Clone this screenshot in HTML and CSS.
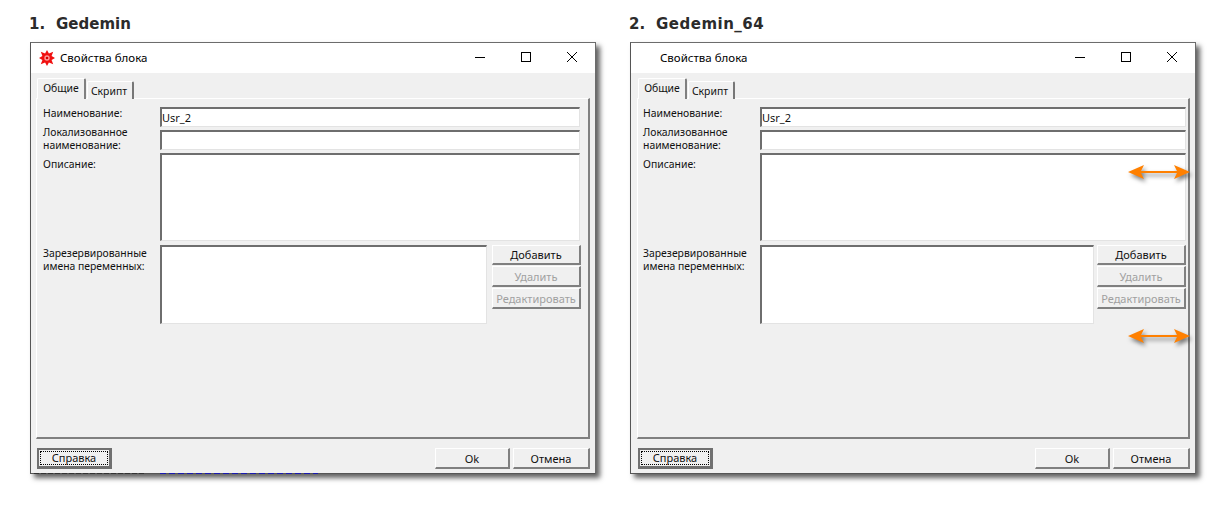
FILE: index.html
```html
<!DOCTYPE html>
<html lang="ru">
<head>
<meta charset="utf-8">
<title>Gedemin</title>
<link rel="stylesheet" href="styles.css">
</head>
<body>
<main class="page">
  <section class="col">
    <h2 class="heading"><span class="num">1.</span>Gedemin</h2>
    <div class="window win32">
      <header class="titlebar">
        <svg class="appicon" viewBox="0 0 16 16" aria-hidden="true">
          <polygon fill="#f01010" points="16,8 12.6,9.9 14.2,14.2 9.9,12.6 8,16 6.1,12.6 1.8,14.2 3.4,9.9 0,8 3.4,6.1 1.8,1.8 6.1,3.4 8,0 9.9,3.4 14.2,1.8 12.6,6.1"/>
          <circle cx="8" cy="8" r="2.7" fill="#ff9c9c"/>
          <circle cx="8" cy="8" r="1.3" fill="#d40000"/>
        </svg>
        <span class="wintitle">Свойства блока</span>
        <div class="controls">
          <svg class="ctl" viewBox="0 0 46 30" aria-hidden="true"><path d="M18 14.500h10" stroke="#000" stroke-width="1"/></svg>
          <svg class="ctl" viewBox="0 0 46 30" aria-hidden="true"><rect x="18.500" y="9.500" width="9" height="9" fill="none" stroke="#000"/></svg>
          <svg class="ctl" viewBox="0 0 46 30" aria-hidden="true"><path d="M18 9l10 10M28 9l-10 10" stroke="#000" stroke-width="1" fill="none"/></svg>
        </div>
      </header>
      <div class="client">
        <div class="tabs">
          <span class="tab active">Общие</span>
          <span class="tab">Скрипт</span>
        </div>
        <div class="panel">
          <span class="label l-name">Наименование:</span>
          <div class="field"><span class="value">Usr_2</span></div>
          <span class="label l-loc">Локализованное наименование:</span>
          <div class="field"></div>
          <span class="label l-desc">Описание:</span>
          <div class="field"></div>
          <span class="label l-res">Зарезервированные имена переменных:</span>
          <div class="reserved">
            <div class="field memo"></div>
            <div class="btncol">
              <button class="btn side">Добавить</button>
              <button class="btn side off">Удалить</button>
              <button class="btn side off">Редактировать</button>
            </div>
          </div>
        </div>
        <footer class="footer">
          <button class="btn help"><span class="focus">Справка</span></button>
          <button class="btn ok">Ok</button>
          <button class="btn cancel">Отмена</button>
        </footer>
      </div>
    </div>
  </section>
  <section class="col">
    <h2 class="heading wide"><span class="num">2.</span>Gedemin_64</h2>
    <div class="window win64">
      <header class="titlebar">
        <span class="appicon"></span>
        <span class="wintitle">Свойства блока</span>
        <div class="controls">
          <svg class="ctl" viewBox="0 0 46 30" aria-hidden="true"><path d="M18 14.500h10" stroke="#000" stroke-width="1"/></svg>
          <svg class="ctl" viewBox="0 0 46 30" aria-hidden="true"><rect x="18.500" y="9.500" width="9" height="9" fill="none" stroke="#000"/></svg>
          <svg class="ctl" viewBox="0 0 46 30" aria-hidden="true"><path d="M18 9l10 10M28 9l-10 10" stroke="#000" stroke-width="1" fill="none"/></svg>
        </div>
      </header>
      <div class="client">
        <div class="tabs">
          <span class="tab active">Общие</span>
          <span class="tab">Скрипт</span>
        </div>
        <div class="panel">
          <span class="label l-name">Наименование:</span>
          <div class="field"><span class="value">Usr_2</span></div>
          <span class="label l-loc">Локализованное наименование:</span>
          <div class="field"></div>
          <span class="label l-desc">Описание:</span>
          <div class="field"></div>
          <span class="label l-res">Зарезервированные имена переменных:</span>
          <div class="reserved">
            <div class="field memo"></div>
            <div class="btncol">
              <button class="btn side">Добавить</button>
              <button class="btn side off">Удалить</button>
              <button class="btn side off">Редактировать</button>
            </div>
          </div>
        </div>
        <footer class="footer">
          <button class="btn help"><span class="focus">Справка</span></button>
          <button class="btn ok">Ok</button>
          <button class="btn cancel">Отмена</button>
        </footer>
      </div>
      <svg class="arrow a1" viewBox="0 0 72 24" aria-hidden="true"><path d="M4 12 20 5l-3 6h36l-3-6 16 7-16 7 3-6H17l3 6z" fill="#ff8000"/></svg>
      <svg class="arrow a2" viewBox="0 0 72 24" aria-hidden="true"><path d="M4 12 20 5l-3 6h36l-3-6 16 7-16 7 3-6H17l3 6z" fill="#ff8000"/></svg>
    </div>
  </section>
</main>
</body>
</html>
```
FILE: styles.css
```css
* { box-sizing: border-box; }
html, body { margin: 0; padding: 0; background: #fff; }
body { width: 1227px; height: 506px; overflow: hidden; }
.page { display: flex; gap: 34px; padding: 15px 0 0 30px; }
.col { width: 566px; }
.heading {
  margin: 0 0 8px -1px;
  height: 19px;
  font: bold 15px/19px "DejaVu Sans", sans-serif;
  color: #2b2b2b;
  display: flex;
}
.wide { letter-spacing: .5px; }
.num { width: 27px; letter-spacing: 0; }

.window {
  position: relative;
  width: 566px;
  height: 432px;
  border: 1px solid #6c6c6c;
  border-left-color: #555;
  border-bottom-color: #555;
  background: #f0f0f0;
  display: flex;
  flex-direction: column;
  box-shadow: 4px 4px 5px rgba(0,0,0,.62);
  font: 11px/13px "Noto Sans", sans-serif;
  color: #111;
}
.win32::before,
.win32::after {
  content: "";
  position: absolute;
  bottom: -1px;
  height: 1px;
}
.win32::before {
  left: 3px;
  width: 112px;
  background: repeating-linear-gradient(90deg, #333 0 5px, transparent 5px 7px);
}
.win32::after {
  left: 129px;
  width: 158px;
  background: repeating-linear-gradient(90deg, #1a1ab0 0 6px, transparent 6px 9px);
}

.titlebar {
  height: 30px;
  background: #fff;
  display: flex;
  align-items: center;
  flex: none;
}
.appicon { width: 16px; height: 16px; margin: 0 5px 0 8px; flex: none; display: block; }
.wintitle { font: 11.5px/16px "Noto Sans", sans-serif; color: #000; flex: 1; }
.controls { display: flex; }
.ctl { width: 46px; height: 30px; display: block; }

.client { flex: 1; padding: 0 5px; display: flex; flex-direction: column; }
.win64 .client { padding-left: 6px; }

.tabs { display: flex; align-items: flex-end; height: 26px; padding: 5px 0 0 1px; flex: none; position: relative; z-index: 1; margin-bottom: -1px; font-size: 10.4px; }
.tab {
  height: 18px;
  width: 47px;
  padding-top: 3px;
  padding-right: 2px;
  text-align: center;
  background: #f0f0f0;
  border: 1px solid #fff;
  border-right: 2px solid #777;
  border-bottom: 0;
  border-radius: 2px 2px 0 0;
  margin-left: 1px;
}
.tab.active { height: 21px; width: 49px; margin: 0; padding-top: 3px; padding-right: 0; border-right-color: #808080; }

.panel {
  height: 341px;
  flex: none;
  border: 1px solid #fff;
  border-right: 2px solid #808080;
  border-bottom: 2px solid #808080;
  padding: 8px 8px 0 6px;
  display: grid;
  grid-template-columns: 117px 1fr;
  grid-template-rows: 20px 20px 88px 79px;
  row-gap: 3px;
  align-content: start;
}
.win64 .panel { padding-right: 2px; padding-left: 5px; }
.label { display: block; width: 110px; font-size: 10.4px; }
.l-name { margin-top: 0; }
.l-loc { margin-top: -4px; }
.l-desc { margin-top: 5px; }
.l-res { margin-top: 3px; width: 116px; }

.field {
  background: #fff;
  border-top: 2px solid #6e6e6e;
  border-left: 2px solid #6e6e6e;
  border-right: 1px solid #e3e3e3;
  border-bottom: 1px solid #e3e3e3;
  min-width: 0;
}
.value { display: block; padding: 2px 0 0 0; }
.reserved { display: flex; gap: 5px; margin-top: 1px; }
.memo { flex: 1; height: 79px; }
.win64 .reserved { gap: 3px; }
.btncol { width: 89px; display: flex; flex-direction: column; gap: 1px; margin-right: -1px; flex: none; }
.win64 .btncol { margin-right: 0; }

.btn {
  font: 11px/13px "Noto Sans", sans-serif;
  color: #111;
  background: #f0f0f0;
  border: 2px solid;
  border-color: #fff #808080 #808080 #fff;
  border-top-width: 1px;
  border-left-width: 1px;
  padding: 0;
  display: block;
}
.side { height: 21px; width: 89px; }
.side:first-child { height: 20px; }
.off { color: #a0a0a0; }

.footer { display: flex; padding: 9px 0 0 1px; }
.help {
  width: 75px;
  height: 21px;
  border: 2px solid #707070;
  border-right-width: 3px;
  border-bottom-width: 3px;
  margin-right: auto;
  padding: 1px;
}
.focus {
  display: block;
  height: 14px;
  line-height: 12px;
  border: 1px dotted #000;
}
.ok { width: 75px; height: 21px; margin-right: 3px; }
.cancel { width: 77px; height: 21px; }

.arrow {
  position: absolute;
  width: 72px;
  height: 24px;
  left: 493px;
  filter: drop-shadow(2px 3px 2px rgba(0,0,0,.5));
}
.a1 { top: 117px; }
.a2 { top: 281px; }
```
